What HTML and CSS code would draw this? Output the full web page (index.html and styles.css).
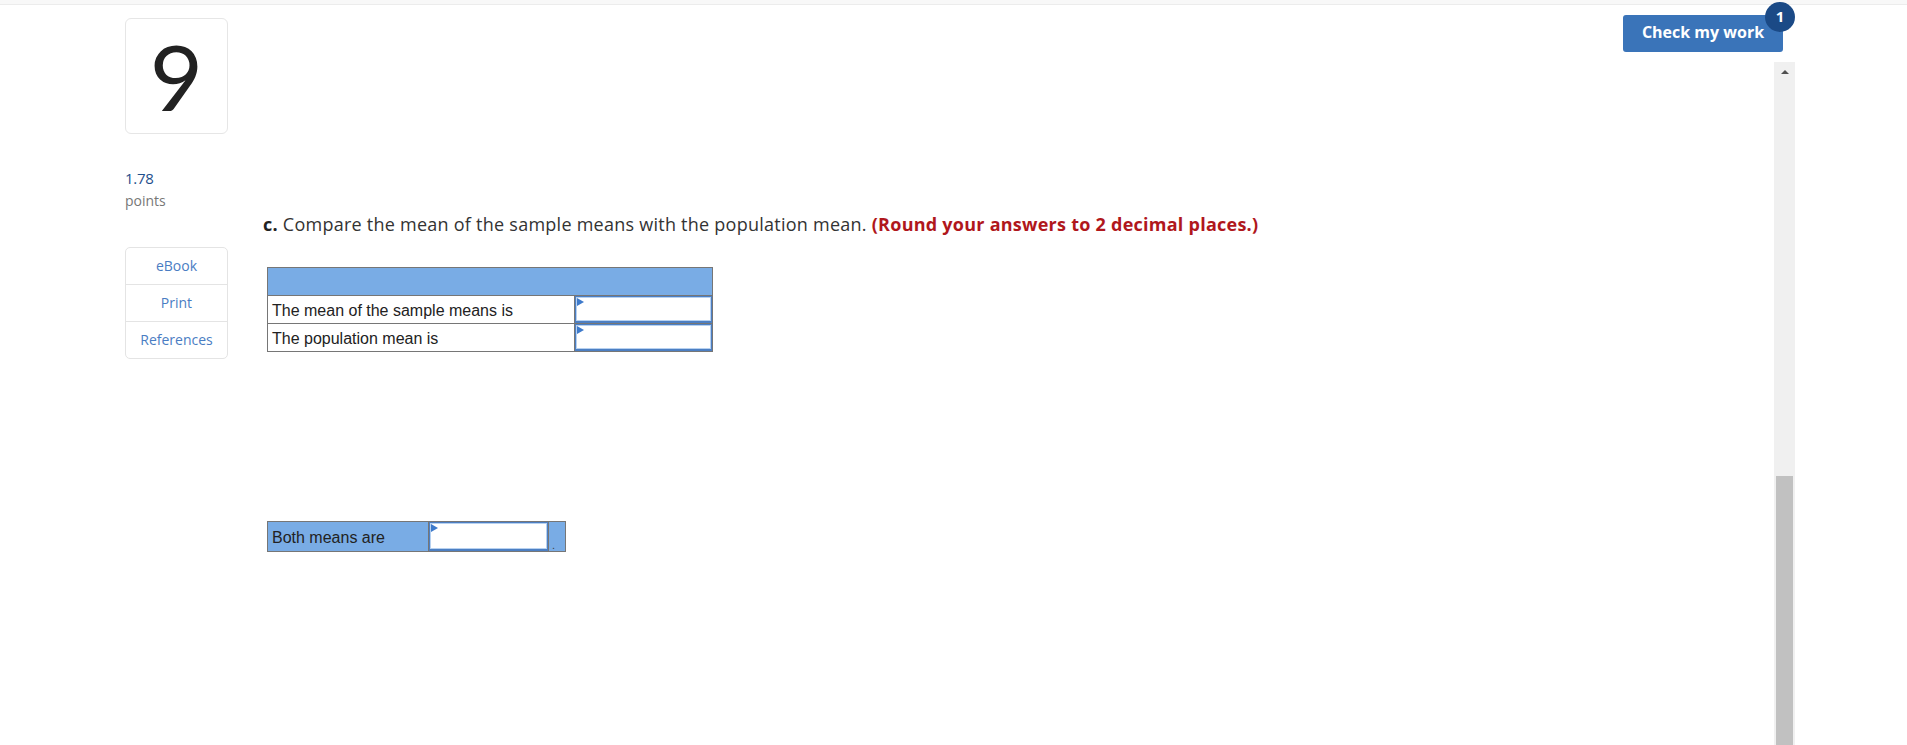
FILE: index.html
```html
<!DOCTYPE html>
<html lang="en">
<head>
<meta charset="UTF-8" />
<meta name="viewport" content="width=device-width, initial-scale=1.0" />
<title>Question 9</title>
<link rel="stylesheet" href="styles.css">
</head>
<body>
  <div class="topbar"></div>
  <div class="page">
    <aside class="sidebar">
      <div class="qnum">9</div>
      <div class="points">
        <div class="points-value">1.78</div>
        <div class="points-label">points</div>
      </div>
      <nav class="tools">
        <a href="#">eBook</a>
        <a href="#">Print</a>
        <a href="#">References</a>
      </nav>
    </aside>

    <main class="question">
      <p class="prompt"><b>c.</b> Compare the mean of the sample means with the population mean. <span class="hint">(Round your answers to 2 decimal places.)</span></p>

      <table class="answers">
        <tr class="head"><td colspan="2"></td></tr>
        <tr>
          <td class="label">The mean of the sample means is</td>
          <td class="entry"><span class="field"></span></td>
        </tr>
        <tr>
          <td class="label">The population mean is</td>
          <td class="entry"><span class="field"></span></td>
        </tr>
      </table>

      <table class="answers inline">
        <tr>
          <td class="label">Both means are</td>
          <td class="entry"><span class="field"></span></td>
          <td class="dot">.</td>
        </tr>
      </table>
    </main>

    <div class="rail">
      <button class="check">Check my work<span class="badge">1</span></button>
      <div class="scrollbar">
        <span class="arrow"></span>
        <div class="thumb"></div>
      </div>
    </div>
  </div>
</body>
</html>
```

FILE: styles.css
```css
body {
  margin: 0;
  font-family: "Open Sans", Lato, sans-serif;
  color: #333;
  background: #fff;
}

.topbar {
  height: 4px;
  background: #f8f8f8;
  border-bottom: 1px solid #ececec;
}

.page {
  display: flex;
  min-height: calc(100vh - 5px);
  padding-left: 125px;
  padding-right: 112px;
}

/* left column */
.sidebar {
  width: 103px;
  flex-shrink: 0;
  padding-top: 13px;
}

.qnum {
  height: 114px;
  border: 1px solid #e6e6e6;
  border-radius: 6px;
  display: flex;
  align-items: center;
  justify-content: center;
  font-family: Lato, sans-serif;
  font-size: 92px;
  color: #222;
  line-height: 1;
}

.points {
  margin-top: 35px;
}
.points-value {
  font-size: 15px;
  line-height: 18px;
  color: #1f508c;
  letter-spacing: -0.3px;
}
.points-label {
  margin-top: 5px;
  font-size: 14px;
  line-height: 18px;
  color: #777;
}

.tools {
  margin-top: 37px;
  display: flex;
  flex-direction: column;
  border: 1px solid #e4e4e4;
  border-radius: 5px;
}
.tools a {
  display: block;
  height: 36px;
  line-height: 36px;
  text-align: center;
  font-size: 14px;
  color: #4a7dc3;
  text-decoration: none;
}
.tools a + a { border-top: 1px solid #e4e4e4; }

/* question body */
.question {
  margin-left: 35px;
  padding-top: 207px;
}

.prompt {
  margin: 0;
  font-size: 18px;
  line-height: 24px;
  letter-spacing: 0.25px;
  color: #333;
}
.prompt b { color: #222; }
.hint {
  color: #b0171c;
  font-weight: bold;
}

.answers {
  margin: 31px 0 0 4px;
  border-collapse: collapse;
  font-family: "Liberation Sans", Arial, sans-serif;
  font-size: 16px;
  color: #222;
}
.answers td {
  border: 1px solid #767676;
  height: 28px;
  padding: 2px 4px 0;
  box-sizing: border-box;
}
.answers .head td {
  background: #79ace5;
}
.answers .label { width: 307px; }
.answers .entry {
  width: 138px;
  padding: 0;
  position: relative;
}

.field {
  display: block;
  height: 100%;
  min-height: 27px;
  box-sizing: border-box;
  border: 1px solid #4c7fc3;
  border-bottom-width: 2px;
  box-shadow: inset 0 0 0 1px #b7d1f0;
  background: #fff;
}
.entry::before {
  content: "";
  position: absolute;
  left: 2px;
  top: 2px;
  border-left: 7px solid #3e7acb;
  border-top: 4px solid transparent;
  border-bottom: 4px solid transparent;
}

.inline {
  margin-top: 169px;
}
.inline td {
  background: #79ace5;
  height: 30px;
}
.inline .label { width: 161px; }
.inline .entry { width: 120px; }
.inline .dot {
  width: 17px;
  padding: 0 3px;
  font-size: 11px;
  vertical-align: bottom;
  color: #444;
}

/* right rail */
.rail {
  margin-left: auto;
  width: 172px;
  display: flex;
  flex-direction: column;
  align-items: flex-end;
  padding-top: 10px;
}

.check {
  position: relative;
  margin-right: 12px;
  width: 160px;
  height: 37px;
  padding: 0 0 3px;
  border: none;
  border-radius: 3px;
  background: #3a74b9;
  color: #fff;
  font-family: "Open Sans", Lato, sans-serif;
  font-size: 16px;
  font-weight: bold;
  cursor: pointer;
}
.badge {
  position: absolute;
  left: 142px;
  top: -13px;
  width: 30px;
  height: 30px;
  border-radius: 50%;
  background: #1b4a86;
  color: #fff;
  font-size: 15px;
  line-height: 29px;
  text-align: center;
}

.scrollbar {
  margin-top: 10px;
  width: 21px;
  flex: 1;
  background: #f0f0f0;
  display: flex;
  flex-direction: column;
  align-items: center;
}
.arrow {
  margin-top: 8px;
  border-bottom: 4px solid #505050;
  border-left: 4px solid transparent;
  border-right: 4px solid transparent;
}
.thumb {
  margin-top: 402px;
  width: 17px;
  flex: 1;
  background: #c1c1c1;
}
```
